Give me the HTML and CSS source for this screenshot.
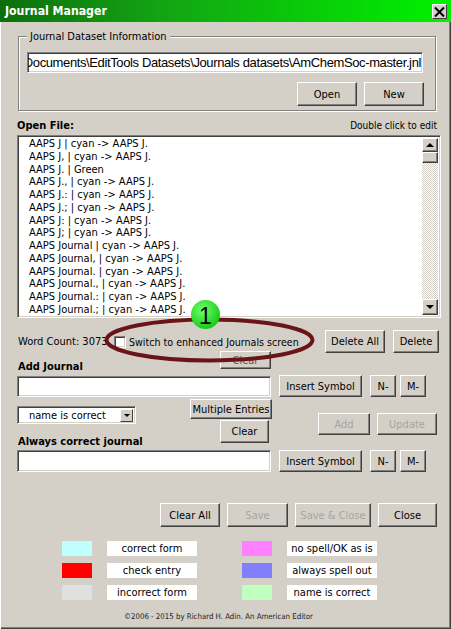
FILE: index.html
```html
<!DOCTYPE html>
<html lang="en">
<head>
    <meta charset="UTF-8">
    <title>Journal Manager</title>
    <link rel="stylesheet" href="styles.css">
</head>
<body>
    <div class="window">
        <div class="titlebar">
            <span>Journal Manager</span>
            <div class="close">
                <svg width="11" height="10" viewBox="0 0 11 10"><path d="M1 0.5 L10 9.5 M10 0.5 L1 9.5" stroke="#000" stroke-width="2"/></svg>
            </div>
        </div>

        <fieldset class="group">
            <legend>Journal Dataset Information</legend>
            <div class="field path"><span>C:\Users\Editor\Documents\EditTools Datasets\Journals datasets\AmChemSoc-master.jnl</span></div>
            <div class="group-buttons">
                <button class="btn w60">Open</button>
                <button class="btn w60">New</button>
            </div>
        </fieldset>

        <div class="list-head">
            <b>Open File:</b>
            <span class="hint">Double click to edit</span>
        </div>
        <div class="listbox">
            <ul class="items">
                <li>AAPS J | cyan -&gt; AAPS J.</li>
                <li>AAPS J, | cyan -&gt; AAPS J.</li>
                <li>AAPS J. | Green</li>
                <li>AAPS J., | cyan -&gt; AAPS J.</li>
                <li>AAPS J.: | cyan -&gt; AAPS J.</li>
                <li>AAPS J.; | cyan -&gt; AAPS J.</li>
                <li>AAPS J: | cyan -&gt; AAPS J.</li>
                <li>AAPS J; | cyan -&gt; AAPS J.</li>
                <li>AAPS Journal | cyan -&gt; AAPS J.</li>
                <li>AAPS Journal, | cyan -&gt; AAPS J.</li>
                <li>AAPS Journal. | cyan -&gt; AAPS J.</li>
                <li>AAPS Journal., | cyan -&gt; AAPS J.</li>
                <li>AAPS Journal.: | cyan -&gt; AAPS J.</li>
                <li>AAPS Journal.; | cyan -&gt; AAPS J.</li>
            </ul>
            <div class="scrollbar">
                <div class="sb-btn"><span class="tri up"></span></div>
                <div class="sb-thumb"></div>
                <div class="sb-track"></div>
                <div class="sb-btn down"><span class="tri dn"></span></div>
            </div>
        </div>

        <!-- word count / delete -->
        <div class="row row-count">
            <span class="word-count">Word Count: 3073</span>
            <label class="check">
                <span class="box"></span>
                Switch to enhanced Journals screen
            </label>
            <button class="btn w60 del-all">Delete All</button>
            <button class="btn w46 del">Delete</button>
        </div>

        <div class="row row-addlabel">
            <b class="label">Add Journal</b>
            <button class="btn hidden-clear">Clear</button>
        </div>

        <div class="row row-input">
            <div class="field text-in"></div>
            <button class="btn ins">Insert Symbol</button>
            <button class="btn nm">N-</button>
            <button class="btn nm">M-</button>
        </div>

        <div class="row row-mid">
            <div class="col col-left">
                <div class="select">
                    <span>name is correct</span>
                    <span class="sel-arrow"><span class="tri dn"></span></span>
                </div>
                <b class="label always">Always correct journal</b>
            </div>
            <div class="col col-multi">
                <button class="btn multi">Multiple Entries</button>
                <button class="btn clear2">Clear</button>
            </div>
            <div class="col col-add">
                <button class="btn add" disabled>Add</button>
                <button class="btn w60 update" disabled>Update</button>
            </div>
        </div>

        <div class="row row-input2">
            <div class="field text-in"></div>
            <button class="btn ins">Insert Symbol</button>
            <button class="btn nm">N-</button>
            <button class="btn nm">M-</button>
        </div>

        <div class="row row-bottom">
            <button class="btn w60">Clear All</button>
            <button class="btn w61" disabled>Save</button>
            <button class="btn w76" disabled>Save &amp; Close</button>
            <button class="btn w59">Close</button>
        </div>

        <div class="legend">
            <span class="swatch" style="background:#c0ffff"></span>
            <span class="key">correct form</span>
            <span class="swatch" style="background:#ff80ff"></span>
            <span class="key">no spell/OK as is</span>
            <span class="swatch" style="background:#ff0000"></span>
            <span class="key">check entry</span>
            <span class="swatch" style="background:#8080ff"></span>
            <span class="key">always spell out</span>
            <span class="swatch" style="background:#e0e0e0"></span>
            <span class="key">incorrect form</span>
            <span class="swatch" style="background:#c0ffc0"></span>
            <span class="key">name is correct</span>
        </div>

        <div class="footer">©2006 - 2015 by Richard H. Adin. An American Editor</div>

        <!-- callout drawn over the screenshot -->
        <svg class="callout" width="226" height="72" viewBox="0 0 226 72">
            <defs>
                <radialGradient id="g" cx="40%" cy="35%" r="70%">
                    <stop offset="0" stop-color="#6dff6d"/>
                    <stop offset="1" stop-color="#12c812"/>
                </radialGradient>
            </defs>
            <ellipse cx="109.5" cy="45" rx="103" ry="20.5" fill="none" stroke="#6a1418" stroke-width="4"/>
            <circle cx="105.5" cy="19.5" r="14.5" fill="url(#g)"/>
            <text x="105.5" y="28.5" text-anchor="middle" class="num">1</text>
        </svg>
    </div>
</body>
</html>
```

FILE: styles.css
```css
* {
    box-sizing: border-box;
}

html, body {
    margin: 0;
    padding: 0;
    background-color: #d4d0c8;
}

body {
    font-family: 'DejaVu Sans Condensed', 'DejaVu Sans', sans-serif;
    font-size: 11px;
    color: #000;
}

.window {
    position: relative;
    width: 451px;
    height: 629px;
    overflow: hidden;
    background-color: #d4d0c8;
    box-shadow: inset 1px 0 #fff, inset -1px -1px #404040, inset -2px -2px #808080;
}

.titlebar {
    height: 22px;
    display: flex;
    align-items: center;
    justify-content: space-between;
    padding: 0 4px 0 5px;
    background: linear-gradient(to right, #0b6f0b, #13a313 35%, #00f200);
    color: #fff;
    font-weight: bold;
    font-size: 12.2px;
}

.titlebar .close {
    width: 15px;
    height: 15px;
    margin-top: 1px;
    background-color: #d4d0c8;
    border: 1px solid;
    border-color: #fff #404040 #404040 #fff;
    display: flex;
    align-items: center;
    justify-content: center;
}

/* classic 3d button */
.btn {
    font-family: inherit;
    font-size: 11px;
    color: #000;
    background-color: #d4d0c8;
    border: 1px solid;
    border-color: #fff #404040 #404040 #fff;
    box-shadow: inset -1px -1px #808080;
    padding: 0;
    height: 23px;
}

.btn:disabled {
    color: #a7a49e;
}

.w46 { width: 46px; }
.w59 { width: 59px; }
.w60 { width: 60px; }
.w61 { width: 61px; }
.w76 { width: 76px; }

/* sunken white field */
.field {
    background-color: #fff;
    border: 1px solid;
    border-color: #808080 #fff #fff #808080;
    box-shadow: inset 1px 1px #404040, inset -1px -1px #d4d0c8;
}

.group {
    margin: 8px 15px 0 18px;
    padding: 0 0 3px 0;
    height: 81px;
    border: 1px solid #808080;
    box-shadow: inset 1px 1px #fff, 1px 1px #fff;
}

.group legend {
    margin-left: 8px;
    padding: 0 3px;
    line-height: 13px;
    background-color: #d4d0c8;
}

.path {
    margin: 9px 0 0 8px;
    width: 396px;
    height: 21px;
    display: flex;
    justify-content: flex-end;
    align-items: center;
    overflow: hidden;
    padding-right: 1px;
    font-family: 'Liberation Sans', Arial, sans-serif;
    font-size: 13px;
    letter-spacing: -0.38px;
    white-space: nowrap;
}

.group-buttons {
    display: flex;
    justify-content: flex-end;
    gap: 7px;
    margin: 9px 11px 0 0;
}

.group-buttons .btn {
    height: 24px;
}

.list-head {
    display: flex;
    justify-content: space-between;
    align-items: baseline;
    margin: 8px 14px 0 17px;
    line-height: 13px;
}

.list-head .hint {
    font-size: 10px;
}

.listbox {
    margin: 3px 10px 0 17px;
    height: 183px;
    display: flex;
    border: 1px solid;
    border-color: #808080 #fff #fff #808080;
    box-shadow: inset 1px 1px #404040, inset -1px -1px #d4d0c8;
    background-color: #fff;
    padding: 2px;
}

.items {
    flex: 1;
    list-style: none;
    margin: 0;
    padding: 0 0 0 9px;
    line-height: 12.75px;
    white-space: nowrap;
    overflow: hidden;
}

.scrollbar {
    width: 16px;
    display: flex;
    flex-direction: column;
}

.sb-btn, .sb-thumb {
    background-color: #d4d0c8;
    border: 1px solid;
    border-color: #fff #404040 #404040 #fff;
    box-shadow: inset -1px -1px #808080;
    display: flex;
    align-items: center;
    justify-content: center;
}

.sb-btn {
    height: 14px;
}

.sb-btn.down {
    height: 16px;
}

.sb-thumb {
    height: 11px;
}

.sb-track {
    flex: 1;
    background: repeating-conic-gradient(#d4d0c8 0 25%, #fff 0 50%) 0 0 / 2px 2px;
}

.tri {
    width: 0;
    height: 0;
    border-left: 4px solid transparent;
    border-right: 4px solid transparent;
}

.tri.up {
    border-bottom: 4px solid #000;
}

.tri.dn {
    border-top: 4px solid #000;
}

.row {
    display: flex;
    align-items: flex-start;
    margin-left: 17px;
}

.row-count {
    margin-top: 12px;
    align-items: center;
    height: 23px;
}

.word-count {
    margin-left: 1px;
    width: 94px;
    white-space: nowrap;
    overflow: visible;
}

.check {
    display: flex;
    align-items: center;
    gap: 3px;
    background-color: #d4d0c8;
    margin-left: -3px;
    padding-left: 5px;
    width: 203px;
    height: 18px;
    font-size: 10.6px;
    white-space: nowrap;
}

.check .box {
    flex: none;
    width: 12px;
    height: 12px;
    background-color: #fff;
    border: 1px solid;
    border-color: #808080 #fff #fff #808080;
    box-shadow: inset 1px 1px #404040, inset -1px -1px #d4d0c8;
}

.del-all {
    margin-left: 13px;
}

.del {
    margin-left: 8px;
}

.row-addlabel {
    margin-top: -2px;
    height: 18px;
}

.label {
    display: block;
    line-height: 13px;
    white-space: nowrap;
}

.row-addlabel .label {
    margin: 9px 0 0 1px;
    width: 202px;
}

.hidden-clear {
    width: 51px;
    height: 18px;
    color: #5a5854;
}

.row-input {
    margin-top: 6px;
}

.text-in {
    width: 254px;
    height: 21px;
    margin-top: 1px;
}

.ins {
    width: 83px;
    height: 22px;
    margin-left: 8px;
}

.nm {
    width: 26px;
    height: 22px;
    margin-left: 8px;
}

.nm + .nm {
    margin-left: 4px;
}

.col {
    display: flex;
    flex-direction: column;
    align-items: flex-start;
}

.col-left {
    width: 119px;
}

.select {
    margin-top: 9px;
    width: 119px;
    height: 18px;
    display: flex;
    align-items: center;
    justify-content: space-between;
    padding: 0 2px 0 11px;
    background-color: #fff;
    border: 1px solid;
    border-color: #808080 #fff #fff #808080;
    box-shadow: inset 1px 1px #404040, inset -1px -1px #d4d0c8;
}

.sel-arrow {
    width: 13px;
    height: 13px;
    background-color: #d4d0c8;
    border: 1px solid;
    border-color: #fff #404040 #404040 #fff;
    display: flex;
    align-items: center;
    justify-content: center;
}

.sel-arrow .tri {
    border-left-width: 3px;
    border-right-width: 3px;
    border-top-width: 3px;
}

.always {
    margin: 11px 0 0 1px;
}

.col-multi {
    margin-left: 54px;
}

.multi {
    margin-top: 2px;
    width: 82px;
    height: 20px;
}

.clear2 {
    margin: 1px 0 0 30px;
    width: 49px;
}

.col-add {
    flex-direction: row;
    margin-left: 46px;
}

.add {
    margin-top: 16px;
    width: 52px;
    height: 22px;
}

.update {
    margin: 16px 0 0 7px;
    height: 22px;
}

.row-input2 {
    margin-top: 2px;
}

.row-input2 .text-in {
    height: 22px;
    margin-top: 0;
}

.row-bottom {
    margin: 31px 0 0 160px;
    gap: 7px;
}

.row-bottom .btn {
    height: 24px;
}

.legend {
    display: grid;
    grid-template-columns: 45px 135px 45px 90px;
    grid-auto-rows: 15px;
    row-gap: 7px;
    margin: 14px 0 0 62px;
}

.legend .swatch {
    width: 30px;
}

.legend .key {
    width: 90px;
    background-color: #fff;
    text-align: center;
    line-height: 15px;
    white-space: nowrap;
}

.footer {
    margin-top: 12px;
    text-align: center;
    padding-right: 14px;
    font-size: 7.8px;
    color: #222;
}

.callout {
    position: absolute;
    left: 100px;
    top: 295px;
    pointer-events: none;
}

.callout .num {
    font-family: 'Liberation Sans', Arial, sans-serif;
    font-size: 23px;
    fill: #000;
}
```
